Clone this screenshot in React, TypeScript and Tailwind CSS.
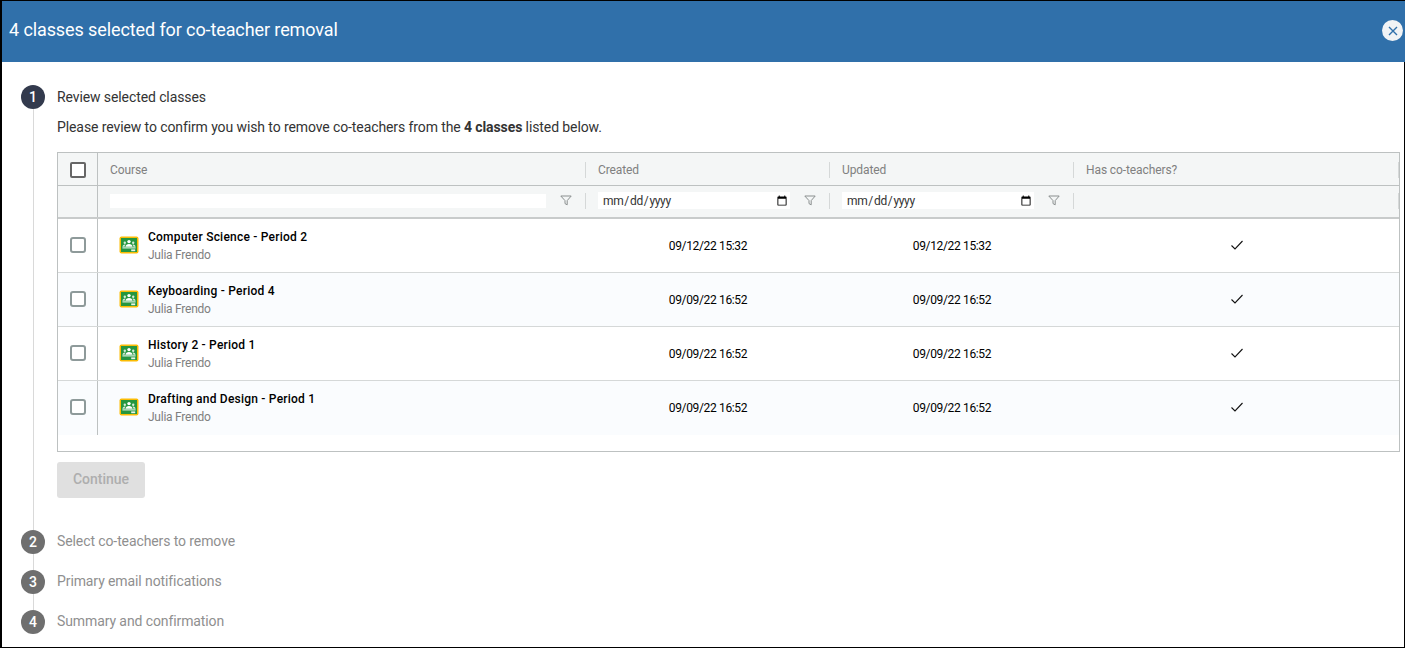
const rows = [
  { name: "Computer Science - Period 2", date: "09/12/22 15:32" },
  { name: "Keyboarding - Period 4", date: "09/09/22 16:52" },
  { name: "History 2 - Period 1", date: "09/09/22 16:52" },
  { name: "Drafting and Design - Period 1", date: "09/09/22 16:52" },
];

function Funnel() {
  return (
    <svg width="12" height="11" viewBox="0 0 12 11" fill="none" stroke="#8a8f8f" strokeWidth="1" className="shrink-0">
      <path d="M0.8 1h10.4L7.2 5.6V9.8L5 8.6V5.6z" strokeLinejoin="round" />
    </svg>
  );
}

function Classroom() {
  return (
    <svg width="20" height="18" viewBox="0 0 20 18" className="shrink-0">
      <rect x="0.5" y="0.5" width="19" height="17" rx="2" fill="#fbbc04" />
      <rect x="2" y="2" width="16" height="14" fill="#25963f" />
      <circle cx="10" cy="5.6" r="1.7" fill="#fff" />
      <circle cx="5.8" cy="6.8" r="1.2" fill="#d5ecd9" />
      <circle cx="14.2" cy="6.8" r="1.2" fill="#d5ecd9" />
      <path d="M6.4 10.8c0-1.9 1.7-2.9 3.6-2.9s3.6 1 3.6 2.9z" fill="#fff" />
      <path d="M3.4 10.8c0-1.4 1.1-2.4 2.4-2.4.3 0 .5 0 .8.1-.6.6-1 1.3-1 2.3zM16.6 10.8c0-1.4-1.1-2.4-2.4-2.4-.3 0-.5 0-.8.1.6.6 1 1.3 1 2.3z" fill="#d5ecd9" />
      <rect x="3.4" y="11.4" width="13.2" height="1" fill="#fff" />
      <rect x="12.2" y="13.4" width="4" height="1.8" fill="#e8f3ea" />
    </svg>
  );
}

function Step({ n, label, active, last, children }: { n: number; label: string; active?: boolean; last?: boolean; children?: React.ReactNode }) {
  return (
    <div className="flex">
      <div className="flex w-6 shrink-0 flex-col items-center">
        <div className={`z-10 flex h-6 w-6 shrink-0 items-center justify-center rounded-full text-sm font-medium text-white ${active ? "bg-[#333a4d]" : "bg-[#6f6f6f]"}`}>
          {n}
        </div>
        {!last && <div className="w-px flex-1 bg-[#d9d9d9]" />}
      </div>
      <div className="ml-3 min-w-0 flex-1">
        <div className={`flex h-6 items-center text-sm tracking-[-0.1px] ${active ? "text-[#333333]" : "pb-[2px] text-[#8f8f8f]"}`}>{label}</div>
        {children}
      </div>
    </div>
  );
}

function Sep() {
  return <div className="h-[16px] w-px shrink-0 bg-[#d5d8d8]" />;
}

export default function App() {
  const cols = "grid grid-cols-[40px_488px_244px_244px_1fr]";
  return (
    <div className="flex h-[648px] w-[1405px] flex-col border-t border-l-2 border-black font-['Roboto',sans-serif]">
      <div className="flex h-[61px] shrink-0 items-center justify-between bg-[#3070aa] pr-[2px] pb-[2px] pl-[7px]">
        <div className="pb-[1px] text-lg tracking-[-0.1px] text-white">4 classes selected for co-teacher removal</div>
        <div className="flex h-[21px] w-[21px] items-center justify-center rounded-full bg-[#f1f3f5]">
          <svg width="12" height="12" viewBox="0 0 12 12" stroke="#3070aa" strokeWidth="1.4" fill="none">
            <path d="M2 2l8 8M10 2l-8 8" />
          </svg>
        </div>
      </div>
      <div className="box-border flex min-h-0 flex-1 flex-col border-r border-b border-black pt-[23px] pr-[4px] pl-[19px]">
        <Step n={1} label="Review selected classes" active>
          <div className="mt-[6px] text-sm leading-[24px] tracking-[-0.1px] text-[#333333]">
            Please review to confirm you wish to remove co-teachers from the <b className="font-bold">4 classes</b> listed below.
          </div>
          <div className="mt-[13px] h-[300px] border border-[#bdc1c1]">
            <div className={`${cols} h-[33px] border-b border-[#bdc1c1] bg-[#f4f6f6] text-xs tracking-[-0.1px] text-[#808080]`}>
              <div className="flex items-center justify-center border-r border-[#bdc1c1] pt-[2px]">
                <div className="h-4 w-4 rounded-[2px] border-2 border-[#666666] bg-white" />
              </div>
              <div className="flex items-center justify-between pt-[2px] pl-3"><span>Course</span><Sep /></div>
              <div className="flex items-center justify-between pt-[2px] pl-3"><span>Created</span><Sep /></div>
              <div className="flex items-center justify-between pt-[2px] pl-3"><span>Updated</span><Sep /></div>
              <div className="flex items-center justify-between pt-[2px] pl-3"><span>Has co-teachers?</span><Sep /></div>
            </div>
            <div className={`${cols} h-[33px] border-b-2 border-[#c8cbcb] bg-[#f4f6f6]`}>
              <div className="border-r border-[#bdc1c1]" />
              <div className="flex items-center pb-[2px] pl-3">
                <input className="h-[14px] w-[436px] bg-white outline-none" aria-label="Course filter" />
                <div className="ml-[14px] flex w-[12px]"><Funnel /></div>
                <div className="ml-[13px]"><Sep /></div>
              </div>
              {["Created filter", "Updated filter"].map((l) => (
                <div key={l} className="flex items-center pb-[2px] pl-3">
                  <input type="date" aria-label={l} className="h-[17px] w-[192px] bg-white pl-[4px] text-xs tracking-[-0.35px] text-[#333333] outline-none" />
                  <div className="ml-[14px] flex w-[12px]"><Funnel /></div>
                  <div className="ml-[13px]"><Sep /></div>
                </div>
              ))}
              <div className="flex items-center justify-end pb-[2px]"><Sep /></div>
            </div>
            {rows.map((r, i) => (
              <div key={r.name} className={`${cols} h-[54px] border-b border-[#d5d8d8] text-xs text-black last:border-b-0 ${i % 2 ? "bg-[#fafcfe]" : "bg-white"}`}>
                <div className="flex items-center justify-center border-r border-[#bdc1c1] pb-[2px]">
                  <div className="h-4 w-4 rounded-[3px] border-2 border-[#8e9a9a] bg-white" />
                </div>
                <div className="flex items-center pl-[21px]">
                  <div className="flex pb-[2px]"><Classroom /></div>
                  <div className="ml-[9px] flex flex-col gap-[2px]">
                    <div className="leading-4 font-medium tracking-[0.22px]">{r.name}</div>
                    <div className="leading-4 tracking-[-0.25px] text-[#7f7f7f]">Julia Frendo</div>
                  </div>
                </div>
                <div className="flex items-center justify-center tracking-[-0.35px]">{r.date}</div>
                <div className="flex items-center justify-center tracking-[-0.35px]">{r.date}</div>
                <div className="flex items-center justify-center pb-[2px]">
                  <svg width="14" height="12" viewBox="0 0 14 12" fill="none" stroke="#111" strokeWidth="1.1"><path d="M1.5 6.5l3.5 3.5L12.5 2" /></svg>
                </div>
              </div>
            ))}
          </div>
          <button disabled className="mt-[10px] mb-[32px] block h-9 w-[88px] rounded-[3px] bg-[#e0e0e0] pb-[2px] text-sm font-medium text-[#aeaeae]">Continue</button>
        </Step>
        <Step n={2} label="Select co-teachers to remove"><div className="h-4" /></Step>
        <Step n={3} label="Primary email notifications"><div className="h-4" /></Step>
        <Step n={4} label="Summary and confirmation" last />
      </div>
    </div>
  );
}
